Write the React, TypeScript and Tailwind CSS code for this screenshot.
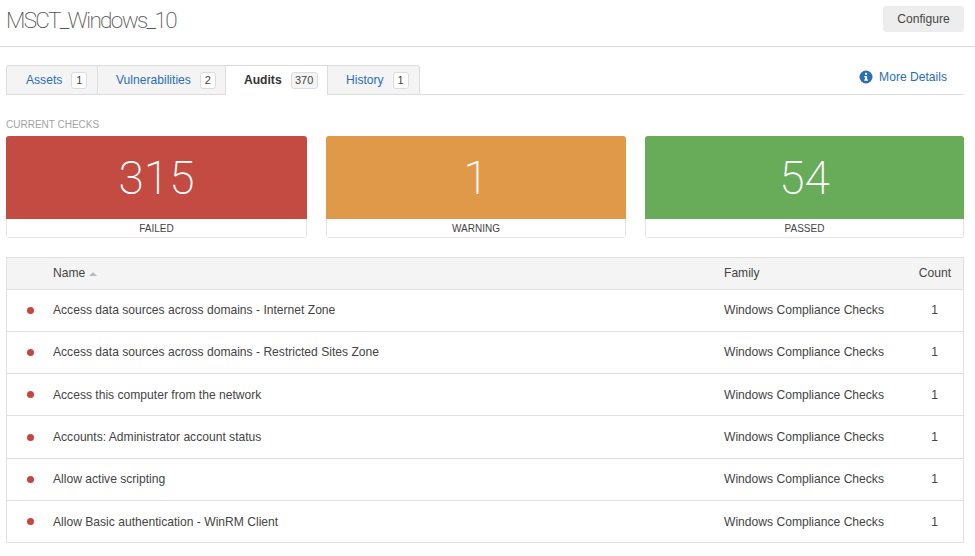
const sans = '[font-family:"Liberation_Sans",Arial,sans-serif]';

const tabs = [
  { label: 'Assets', count: '1', width: 'w-[92px]', pad: 'pl-[19px]' },
  { label: 'Vulnerabilities', count: '2', width: 'w-[128px]', pad: 'pl-[18px]' },
  { label: 'Audits', count: '370', width: 'w-[102px]', pad: 'pl-[18px]', active: true },
  { label: 'History', count: '1', width: 'w-[92px]', pad: 'pl-[18px]' },
];

const checks = [
  { value: '315', label: 'FAILED', bg: 'bg-[#c44b41]' },
  { value: '1', label: 'WARNING', bg: 'bg-[#e09849]' },
  { value: '54', label: 'PASSED', bg: 'bg-[#68ab59]' },
];

const rows = [
  'Access data sources across domains - Internet Zone',
  'Access data sources across domains - Restricted Sites Zone',
  'Access this computer from the network',
  'Accounts: Administrator account status',
  'Allow active scripting',
  'Allow Basic authentication - WinRM Client',
];

export default function App() {
  return (
    <div className={`${sans} h-[556px] w-[975px] overflow-hidden bg-white text-[#444]`}>
      <header className="flex h-[47px] items-start justify-between border-b border-[#dcdcdc] pl-[6px] pr-[11px]">
        <h1 className="mt-[5px] text-[22.5px] leading-[30px] font-[200] tracking-[-1.65px] text-[#555] [font-family:Roboto,sans-serif]">
          MSCT_Windows_10
        </h1>
        <button className="mt-[6px] h-[26px] w-[81px] rounded-[3px] bg-[#ededed] text-[12.1px] text-[#444]">
          Configure
        </button>
      </header>

      <div className="ml-[6px] mr-[11px] mt-[18px] flex h-[30px] items-stretch justify-between border-b border-[#dcdcdc]">
        <div className="flex">
          {tabs.map((tab) => (
            <div
              key={tab.label}
              className={`${tab.width} ${tab.pad} flex items-center gap-[9px] border-r border-t border-[#dcdcdc] text-[12.1px] first:rounded-tl-[3px] first:border-l last:rounded-tr-[3px] ${
                tab.active ? 'relative z-10 -mb-px bg-white font-bold text-[#333]' : 'bg-[#f4f4f4] text-[#2a6eb5]'
              }`}
            >
              <span>{tab.label}</span>
              <span
                className={`flex h-[17px] items-center justify-center rounded-[3px] border border-[#dcdcdc] text-[11px] font-normal text-[#444] ${
                  tab.active ? 'w-[27px] bg-[#f4f4f4]' : 'w-[16px] bg-white'
                }`}
              >
                {tab.count}
              </span>
            </div>
          ))}
        </div>
        <a className="mr-[17px] mt-[4px] flex h-[16px] items-center gap-[6px] text-[12.1px] text-[#2a6eb5]">
          <svg width="14" height="14" viewBox="0 0 14 14">
            <circle cx="7" cy="7" r="6.5" fill="#2a6eb5" />
            <rect x="6" y="2.8" width="2.1" height="2" rx="0.6" fill="#fff" />
            <path d="M5.2 6h2.9v3.6h.9v1.2H5.2V9.6h.9V7.2h-.9z" fill="#fff" />
          </svg>
          More Details
        </a>
      </div>

      <div className="ml-[6px] mt-[24px] text-[10px] leading-[12px] text-[#a3a3a3]">CURRENT CHECKS</div>

      <div className="ml-[6px] mr-[11px] mt-[5px] grid grid-cols-[301px_300px_319px] gap-x-[19px]">
        {checks.map((check) => (
          <div key={check.label} className="overflow-hidden rounded-[3px] border-b border-[#e4e4e4]">
            <div
              className={`${check.bg} flex h-[83px] items-center justify-center pt-[1px] text-[46px] font-[200] text-white [font-family:Roboto,sans-serif]`}
            >
              {check.value}
            </div>
            <div className="flex h-[18px] items-center justify-center border-x border-[#e4e4e4] text-[10px] text-[#444]">
              {check.label}
            </div>
          </div>
        ))}
      </div>

      <div className="ml-[6px] mr-[11px] mt-[19px] border-x border-t border-[#e0e0e0] text-[12.1px]">
        <div className="flex h-[31.5px] items-center border-b border-[#e0e0e0] bg-[#f4f4f4]">
          <div className="flex w-[717px] items-center gap-[4px] pl-[46px]">
            Name
            <span className="mt-[1px] h-0 w-0 border-x-[4px] border-b-[4px] border-x-transparent border-b-[#bbb]" />
          </div>
          <div className="flex-1">Family</div>
          <div className="w-[57px] pr-[12px] text-right">Count</div>
        </div>
        {rows.map((name) => (
          <div key={name} className="flex h-[42.3px] items-center border-b border-[#e0e0e0]">
            <div className="flex w-[46px] justify-center">
              <span className="h-[7px] w-[7px] rounded-full bg-[#c8443c]" />
            </div>
            <div className="w-[671px]">{name}</div>
            <div className="flex-1">Windows Compliance Checks</div>
            <div className="w-[57px] pr-[25px] text-right">1</div>
          </div>
        ))}
      </div>
    </div>
  );
}
